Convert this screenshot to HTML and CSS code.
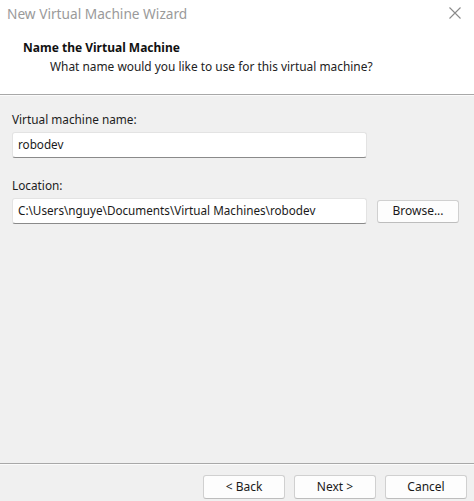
FILE: index.html
```html
<!DOCTYPE html>
<html>
<head>
<meta charset="utf-8">
<link rel="stylesheet" href="styles.css">
</head>
<body>
<div class="window">
  <div class="titlebar">
    <span class="title">New Virtual Machine Wizard</span>
    <svg class="close" width="12" height="12" viewBox="0 0 12 12"><path d="M0.5 0.5 L11.5 11.5 M11.5 0.5 L0.5 11.5" stroke="#8a8a8a" stroke-width="1.1" fill="none"/></svg>
  </div>
  <div class="header">
    <div class="h-title">Name the Virtual Machine</div>
    <div class="h-sub">What name would you like to use for this virtual machine?</div>
  </div>
  <div class="body">
    <div class="label">Virtual machine name:</div>
    <div class="row">
      <div class="input">robodev</div>
    </div>
    <div class="label loc">Location:</div>
    <div class="row">
      <div class="input">C:\Users\nguye\Documents\Virtual Machines\robodev</div>
      <div class="btn browse">Browse...</div>
    </div>
  </div>
  <div class="footer">
    <div class="btn">&lt; Back</div>
    <div class="btn">Next &gt;</div>
    <div class="btn">Cancel</div>
  </div>
</div>
</body>
</html>
```
FILE: styles.css
```css
* { box-sizing: border-box; }
html, body { margin: 0; padding: 0; }
body {
  width: 474px;
  height: 501px;
  font-family: "Noto Sans", "Open Sans", sans-serif;
  color: #1a1a1a;
  background: #f0f0f0;
  overflow: hidden;
}
.window {
  display: flex;
  flex-direction: column;
  height: 501px;
}
.titlebar {
  height: 30px;
  background: #fff;
  display: flex;
  align-items: center;
  justify-content: space-between;
  padding: 0 13px 0 7px;
}
.title {
  font-size: 13.7px;
  color: #9a9a9a;
  margin-top: -3px;
}
.close { margin-top: -4px; }
.header {
  background: #fff;
  height: 65px;
  padding: 8px 0 0 23px;
  border-bottom: 1px solid #a8a8a8;
}
.h-title {
  font-weight: bold;
  font-size: 12px;
  line-height: 19px;
  color: #111;
}
.h-sub {
  font-size: 11.9px;
  line-height: 19px;
  padding-left: 27px;
  color: #222;
}
.body {
  flex: 1;
  border-top: 1px solid #fbfbfb;
  padding: 14px 0 0 12px;
  border-bottom: 1px solid #a8a8a8;
}
.label {
  font-size: 11.8px;
  line-height: 18px;
  color: #1c1c1c;
  margin-bottom: 4px;
}
.label.loc { margin-top: 18px; margin-bottom: 4px; }
.row {
  display: flex;
  align-items: center;
  gap: 10px;
}
.input {
  width: 355px;
  height: 26px;
  background: #fff;
  border: 1px solid #e3e3e3;
  border-bottom: 1px solid #8a8a8a;
  border-radius: 3px;
  padding: 0 0 0 5px;
  font-size: 11.7px;
  line-height: 23px;
  color: #1a1a1a;
}
.btn {
  width: 82px;
  height: 24px;
  background: #fdfdfd;
  border: 1px solid #d0d0d0;
  border-bottom-color: #bdbdbd;
  border-radius: 3px;
  font-size: 12px;
  line-height: 21px;
  text-align: center;
  color: #1a1a1a;
}
.browse { height: 23px; line-height: 20px; }
.footer {
  height: 37px;
  border-top: 1px solid #fbfbfb;
  display: flex;
  justify-content: flex-end;
  align-items: flex-start;
  gap: 9px;
  padding: 10px 7px 0 0;
}
```
